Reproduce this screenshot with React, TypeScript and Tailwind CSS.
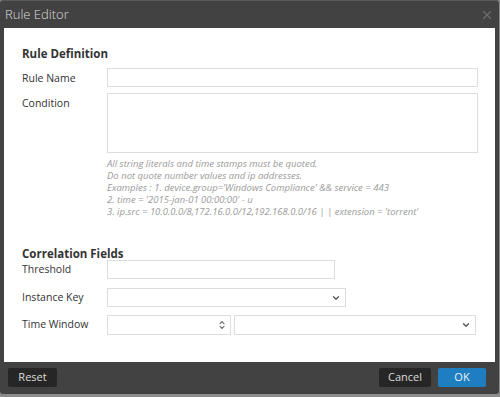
import { ChevronDown, ChevronsUpDown, X } from 'lucide-react';

const font = { fontFamily: '"Open Sans", "Noto Sans", sans-serif' };

function Label({ children }: { children: React.ReactNode }) {
    return <div className="w-[85px] shrink-0 text-[10.5px] text-[#333]">{children}</div>;
}

export default function App() {
    return (
        <div className="w-[500px] h-[397px] bg-[#8c8c8c]" style={font}>
            <div className="w-[499px] h-[394px] bg-[#424242] rounded-[3px] border-t border-[#5a5a5a] flex flex-col">
                {/* title bar */}
                <div className="h-[27px] flex items-center justify-between pl-[5px] pr-[5px] shrink-0">
                    <span className="text-[13px] text-[#dcdcdc] font-light">Rule Editor</span>
                    <X size={14} className="text-[#6f6f6f]" strokeWidth={2} />
                </div>

                {/* body */}
                <div className="mx-[4px] bg-white h-[334px] shrink-0 pl-[18px] pr-[17px] pt-[18px]">
                    <h3 className="text-[11.5px] font-bold text-[#333] leading-[16px]">Rule Definition</h3>

                    <div className="mt-[6px] flex items-start">
                        <Label><div className="leading-[20px]">Rule Name</div></Label>
                        <div className="h-[19px] flex-1 border border-[#dcdcdc]"></div>
                    </div>
                    <div className="mt-[5px] flex items-start">
                        <Label><div className="leading-[20px]">Condition</div></Label>
                        <div className="h-[60px] flex-1 border border-[#dcdcdc]"></div>
                    </div>
                    <div className="ml-[85px] mt-[5px] text-[9.5px] italic text-[#9a9a9a] leading-[12px]">
                        <div>All string literals and time stamps must be quoted.</div>
                        <div>Do not quote number values and ip addresses.</div>
                        <div>Examples : 1. device.group='Windows Compliance' &amp;&amp; service = 443</div>
                        <div>2. time = '2015-jan-01 00:00:00' - u</div>
                        <div>3. ip.src = 10.0.0.0/8,172.16.0.0/12,192.168.0.0/16 | | extension = 'torrent'</div>
                    </div>

                    <h3 className="mt-[28px] text-[11.5px] font-bold text-[#333] leading-[16px]">Correlation Fields</h3>

                    <div className="-mt-[2px] flex items-center">
                        <Label>Threshold</Label>
                        <div className="h-[19px] w-[228px] border border-[#dcdcdc]"></div>
                    </div>
                    <div className="mt-[9px] flex items-center">
                        <Label>Instance Key</Label>
                        <div className="h-[19px] w-[239px] border border-[#dcdcdc] flex items-center justify-end pr-[4px]">
                            <ChevronDown size={10} strokeWidth={3} className="text-[#555]" />
                        </div>
                    </div>
                    <div className="mt-[8px] flex items-center">
                        <Label>Time Window</Label>
                        <div className="h-[20px] w-[124px] border border-[#dcdcdc] flex items-center justify-end pr-[3px]">
                            <ChevronsUpDown size={10} strokeWidth={2.5} className="text-[#555]" />
                        </div>
                        <div className="ml-[3px] h-[20px] w-[242px] border border-[#dcdcdc] flex items-center justify-end pr-[4px]">
                            <ChevronDown size={10} strokeWidth={3} className="text-[#555]" />
                        </div>
                    </div>
                </div>

                {/* footer */}
                <div className="flex-1 flex items-center justify-between pl-[8px] pr-[13px] pb-[1px]">
                    <button className="h-[19px] w-[49px] bg-[#262626] rounded-[2px] text-[11px] text-[#dcdcdc]">Reset</button>
                    <div className="flex gap-[7px]">
                        <button className="h-[19px] w-[52px] bg-[#262626] rounded-[2px] text-[11px] text-[#dcdcdc]">Cancel</button>
                        <button className="h-[19px] w-[48px] bg-[#1f7ec0] rounded-[2px] text-[11px] text-[#e8f2fa]">OK</button>
                    </div>
                </div>
            </div>
        </div>
    );
}
